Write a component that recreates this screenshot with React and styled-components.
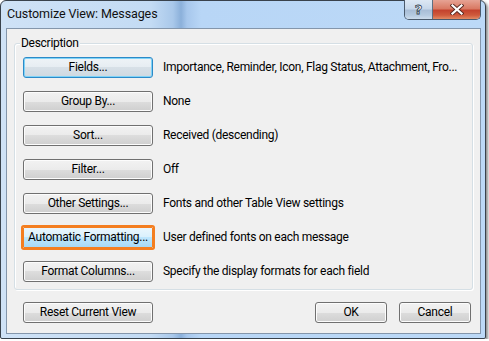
import styled, { createGlobalStyle, css } from 'styled-components';

const GlobalStyle = createGlobalStyle`
  html, body {
    margin: 0;
    padding: 0;
    background: #ffffff;
  }
  body {
    font-family: Roboto, "Noto Sans", sans-serif;
    font-size: 12px;
    letter-spacing: -0.28px;
    color: #000000;
  }
`;

const Window = styled.div`
  display: flex;
  flex-direction: column;
  box-sizing: border-box;
  width: 486px;
  height: 339px;
  border: 1px solid #39424c;
  border-radius: 6px 6px 2px 2px;
  background: linear-gradient(90deg, #cfe2f6 0px, #c3dbf4 150px, #a9c8ea 172px, #8bb0da 180px, #a7c7ec 186px, #b8d6f6 200px, #bcd9f7 100%);
  box-shadow: 2px 2px 3px rgba(0, 0, 0, 0.45);
`;

const TitleBar = styled.div`
  display: flex;
  align-items: flex-start;
  height: 27px;
  padding-left: 6px;
`;

const Title = styled.div`
  padding-top: 5px;
  line-height: 15px;
  font-size: 12.5px;
  letter-spacing: -0.1px;
  color: #111111;
`;

const CaptionButtons = styled.div`
  display: flex;
  margin-left: auto;
  margin-right: 4px;
  margin-top: -1px;
  height: 19px;
  border: 1px solid #4a5a6c;
  border-top: none;
  border-radius: 0 0 5px 5px;
  overflow: hidden;
`;

const CaptionButton = styled.div`
  display: flex;
  align-items: center;
  justify-content: center;
  height: 100%;
  width: ${p => p.$width}px;
  ${p => p.$close ? css`
    background: linear-gradient(#e6a394 0%, #d97a64 45%, #c4432e 55%, #cf5a3c 80%, #e28a64 100%);
  ` : css`
    border-right: 1px solid #5e6f82;
    background: linear-gradient(#dde8f4 0%, #c8d8ea 45%, #a9bed7 55%, #b5cae0 80%, #cddcec 100%);
  `}
`;

const HelpGlyph = styled.span`
  font-family: "DejaVu Sans", sans-serif;
  font-weight: bold;
  font-size: 13px;
  line-height: 13px;
  color: #ffffff;
  -webkit-text-stroke: 0.8px #2f3d4e;
`;

const Client = styled.div`
  flex: 1;
  display: flex;
  flex-direction: column;
  margin: 0 4px 4px 5px;
  padding: 14px 7px 0 7px;
  border: 1px solid #8496ab;
  background: #f0f0f0;
`;

const GroupBox = styled.div`
  position: relative;
  display: flex;
  flex-direction: column;
  gap: 13px;
  padding: 13px 8px 7px 8px;
  border: 1px solid #d5dfe5;
  border-radius: 3px;
  box-shadow: inset 1px 1px 0 #ffffff, 1px 1px 0 #ffffff;
`;

const GroupLabel = styled.span`
  position: absolute;
  top: -8px;
  left: 5px;
  padding: 0 1px;
  line-height: 15px;
  background: #f0f0f0;
`;

const Row = styled.div`
  display: flex;
  align-items: center;
  gap: 10px;
`;

const Button = styled.div`
  display: flex;
  align-items: center;
  justify-content: center;
  box-sizing: border-box;
  flex-shrink: 0;
  width: ${p => p.$width || 130}px;
  height: 21px;
  border: 1px solid #707070;
  border-radius: 3px;
  background: linear-gradient(#f2f2f2 0%, #ebebeb 50%, #dddddd 50%, #cfcfcf 100%);
  box-shadow: inset 0 0 0 1px #fcfcfc;
  font-size: 12px;
  line-height: 15px;
  white-space: nowrap;

  ${p => p.$default && css`
    border-color: #2c8ac8;
    background: linear-gradient(#eef3f7 0%, #e6edf2 50%, #d7e0e7 50%, #cfd9e1 100%);
    box-shadow: inset 0 0 0 1px #7fd3f7;
  `}

  ${p => p.$focused && css`
    border-color: #f47e20;
    border-radius: 1px;
    background: linear-gradient(#eaf6fd 0%, #d9f0fc 50%, #bee6fd 50%, #a7d9f5 100%);
    box-shadow: 0 0 0 2px #f47e20;
  `}
`;

const Description = styled.span`
  white-space: nowrap;
  line-height: 15px;
`;

const BottomRow = styled.div`
  display: flex;
  align-items: center;
  gap: 12px;
  margin-top: 12px;
  padding: 0 2px 0 9px;
`;

const Spacer = styled.div`
  flex: 1;
`;

const rows = [
  { label: 'Fields...', text: 'Importance, Reminder, Icon, Flag Status, Attachment, Fro...', def: true },
  { label: 'Group By...', text: 'None' },
  { label: 'Sort...', text: 'Received (descending)' },
  { label: 'Filter...', text: 'Off' },
  { label: 'Other Settings...', text: 'Fonts and other Table View settings' },
  { label: 'Automatic Formatting...', text: 'User defined fonts on each message', focus: true },
  { label: 'Format Columns...', text: 'Specify the display formats for each field' },
];

function CloseIcon() {
  return (
    <svg width="14" height="11" viewBox="0 0 14 11">
      <path d="M2.5 1.5 L11.5 9.5 M11.5 1.5 L2.5 9.5" stroke="#5a2a22" strokeWidth="4" strokeLinecap="square" />
      <path d="M2.5 1.5 L11.5 9.5 M11.5 1.5 L2.5 9.5" stroke="#ffffff" strokeWidth="2.2" strokeLinecap="square" />
    </svg>
  );
}

export default function App() {
  return (
    <>
      <GlobalStyle />
      <Window>
        <TitleBar>
          <Title>Customize View: Messages</Title>
          <CaptionButtons>
            <CaptionButton $width={27}>
              <HelpGlyph>?</HelpGlyph>
            </CaptionButton>
            <CaptionButton $width={47} $close>
              <CloseIcon />
            </CaptionButton>
          </CaptionButtons>
        </TitleBar>
        <Client>
          <GroupBox>
            <GroupLabel>Description</GroupLabel>
            {rows.map(r => (
              <Row key={r.label}>
                <Button $default={r.def} $focused={r.focus}>{r.label}</Button>
                <Description>{r.text}</Description>
              </Row>
            ))}
          </GroupBox>
          <BottomRow>
            <Button>Reset Current View</Button>
            <Spacer />
            <Button $width={72}>OK</Button>
            <Button $width={72}>Cancel</Button>
          </BottomRow>
        </Client>
      </Window>
    </>
  );
}
